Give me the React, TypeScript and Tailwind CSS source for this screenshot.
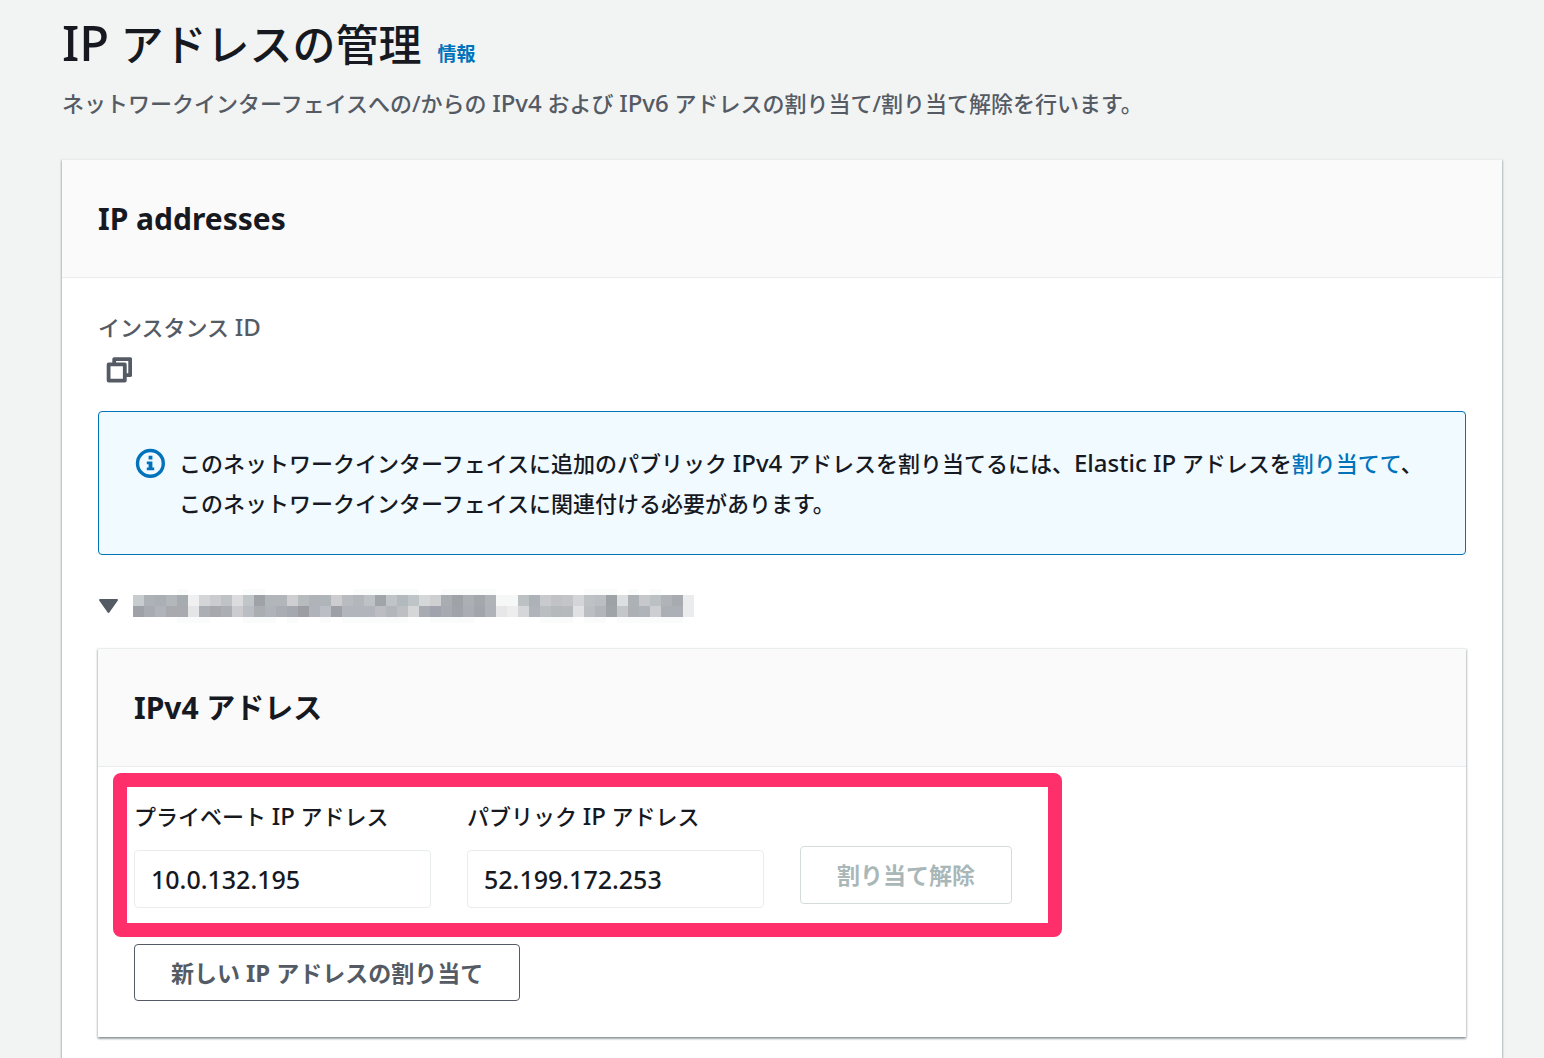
import { useState, type ReactNode } from 'react'

// Colores de la barra censurada, fila superior e inferior
const MASK_TOP =
  'c7cccf adb2b6 a9afb4 b2b7bb a6abaf f0f0f0 d3d5d7 cacccf bfc3c6 dcdcde c0c5c8 9fa3a8 b1b6bb b2b6bb cfcfd1 b6bbbe b0b4b9 b0b5ba cdcdcf b8bcc0 b2b7bb bcc2c5 a0a5aa bfc4c7 b3babd bfc4c6 d6d7d9 cdcfd1 a9adb2 9fa3a8 acb0b5 a4a8ad b0b4b8 f6f7f7 f6f7f7 bcc1c4 adb2b8 c8cacd c0c2c6 c3c5c8 d3d5d8 bfc2c5 babfc4 9da2a6 dddee0 acb1b5 c6c8cb bbc0c3 b0b4b8 a8acb1 ebecee'.split(' ')
const MASK_BOTTOM =
  '9ea1a7 a8abb1 b0b3b9 a8aab0 a8aab0 e4e5e7 abaeb4 a6a8ae abafb4 ccccd0 bbbdc5 aaadb2 b0b3ba a9acb2 a5a8ae 9b9da3 b0b3b9 bbbec5 9da0a6 b2b5bb b2b5bb b2b5bb bbbdc3 b3b7bb bebfc3 d5d6d8 a9abb3 a0a3ad a7aab0 a0a3aa aaadb3 a2a5ab b0b2b9 e7e7ea ededee d5d6d9 b0b3b9 bbbec1 b5b9bc b7babd e0e1e3 bbbfc3 b2b6bb 9fa4a8 c4c6ca adb0b5 b0b3ba cdced1 acafb6 acafb5 ebecee'.split(' ')
const FAINT_TOP = [4, 10, 11, 20, 21, 22, 23, 24, 25, 28, 29, 30, 31, 32, 41, 42, 43, 45, 47]
const FAINT_BOTTOM = [4, 5, 6, 10, 11, 12, 14, 17, 19, 20, 21, 22, 23, 24, 27, 28, 29, 30, 37, 38, 39, 41, 42, 44, 45, 46, 47, 48, 49]

function MaskedName() {
  return (
    <svg width="561" height="34" viewBox="0 0 561 34" shapeRendering="crispEdges" aria-hidden="true">
      {FAINT_TOP.map((c) => (
        <rect key={`ft${c}`} x={c * 11} y="0" width="11" height="6" fill="#fafbfb" />
      ))}
      {FAINT_BOTTOM.map((c) => (
        <rect key={`fb${c}`} x={c * 11} y="28" width="11" height="6" fill="#fafbfb" />
      ))}
      {MASK_TOP.map((color, i) => (
        <rect key={`t${i}`} x={i * 11} y="6" width="11" height="11" fill={`#${color}`} />
      ))}
      {MASK_BOTTOM.map((color, i) => (
        <rect key={`b${i}`} x={i * 11} y="17" width="11" height="11" fill={`#${color}`} />
      ))}
    </svg>
  )
}

function CopyIcon() {
  return (
    <svg width="26" height="26" viewBox="0 0 26 26" fill="none" stroke="currentColor" strokeWidth="3.8" strokeLinejoin="round" aria-hidden="true">
      <rect x="2.6" y="7.4" width="16.2" height="16.2" />
      <path d="M8.2 7V2.2h16v16H19" />
    </svg>
  )
}

function InfoIcon() {
  return (
    <svg className="shrink-0" width="30" height="30" viewBox="0 0 30 30" fill="#0073bb" aria-hidden="true">
      <circle cx="15.4" cy="15.4" r="12.9" fill="none" stroke="#0073bb" strokeWidth="3.4" />
      <path d="M13.6 7.8h3.8v3.6h-3.8zM11.8 13.4h5.6v6h1.8v2.8h-7.4v-2.8h1.8v-3.2h-1.8z" />
    </svg>
  )
}

// El texto latino va un poco mas grande que el japones
function Latin({ children }: { children: ReactNode }) {
  return <span className="text-[24px]">{children}</span>
}

function Panel({ title, className, children }: { title: ReactNode; className: string; children: ReactNode }) {
  return (
    <section
      className={`border-t border-[#eaeded] bg-white shadow-[0_2px_2px_0_rgba(0,28,36,0.3),1px_1px_2px_0_rgba(0,28,36,0.15),-1px_1px_2px_0_rgba(0,28,36,0.15)] ${className}`}
    >
      <header className="border-b border-[#eaeded] bg-[#fafafa] p-9">
        <h2 className="text-[29px] leading-[45px] font-bold">{title}</h2>
      </header>
      {children}
    </section>
  )
}

function Field({ id, label, initial }: { id: string; label: ReactNode; initial: string }) {
  const [value, setValue] = useState(initial)

  return (
    <div className="flex w-[297px] flex-col gap-4">
      <label htmlFor={id} className="leading-9">
        {label}
      </label>
      <input
        id={id}
        type="text"
        value={value}
        onChange={(e) => setValue(e.target.value)}
        className="h-[58px] w-full rounded-sm border border-[#eaeded] bg-white px-4 text-[25px]"
      />
    </div>
  )
}

export default function App() {
  const [open, setOpen] = useState(true)

  return (
    <main
      lang="ja"
      className="flex min-h-screen flex-col bg-[#f2f3f3] pr-[42px] pl-[62px] font-['Noto_Sans','Noto_Sans_CJK_JP',sans-serif] text-[22px] font-medium text-[#16191f]"
    >
      <div className="flex items-baseline gap-4 pt-3">
        <h1 className="text-[43px] leading-15">
          <span className="text-[49px]">IP</span> アドレスの管理
        </h1>
        <a href="#info" className="text-[19px] font-bold text-[#0073bb]">
          情報
        </a>
      </div>
      <p className="mt-2 leading-10 text-[#545b64]">
        ネットワークインターフェイスへの/からの <Latin>IPv4</Latin> および <Latin>IPv6</Latin> アドレスの割り当て/割り当て解除を行います。
      </p>

      <Panel title={<span className="text-[30px]">IP addresses</span>} className="mt-9 flex-1">
        <div className="px-9 pt-[31px] pb-4">
          <div className="leading-9 text-[#545b64]">
            インスタンス <Latin>ID</Latin>
          </div>
          <button type="button" aria-label="コピー" className="mt-3 ml-2 block text-[#545b64]">
            <CopyIcon />
          </button>

          <div className="mt-7 flex gap-[14px] rounded-sm border border-[#0073bb] bg-[#f1faff] px-9 py-[31px]">
            <div className="flex h-10 items-center">
              <InfoIcon />
            </div>
            <p className="leading-10">
              このネットワークインターフェイスに追加のパブリック <Latin>IPv4</Latin> アドレスを割り当てるには、<Latin>Elastic IP</Latin> アドレスを
              <a href="#allocate" className="text-[#0073bb]">
                割り当てて
              </a>
              、<br />
              このネットワークインターフェイスに関連付ける必要があります。
            </p>
          </div>

          <button
            type="button"
            aria-expanded={open}
            aria-label="インターフェイス"
            onClick={() => setOpen(!open)}
            className="mt-[34px] flex items-center gap-[15px]"
          >
            <svg width="20" height="16" viewBox="0 0 20 16" fill="#545b64" stroke="#545b64" strokeWidth="2" strokeLinejoin="round" aria-hidden="true">
              <path d="M2 2h17l-8.5 12z" />
            </svg>
            <MaskedName />
          </button>

          {open && (
            <Panel
              title={
                <>
                  <span className="text-[30px]">IPv4</span> アドレス
                </>
              }
              className="mt-[25px]"
            >
              <div className="px-9 pt-[31px] pb-9">
                <div className="relative flex w-fit items-end gap-9">
                  <Field
                    id="private-ip"
                    label={
                      <>
                        プライベート <Latin>IP</Latin> アドレス
                      </>
                    }
                    initial="10.0.132.195"
                  />
                  <Field
                    id="public-ip"
                    label={
                      <>
                        パブリック <Latin>IP</Latin> アドレス
                      </>
                    }
                    initial="52.199.172.253"
                  />
                  <button
                    type="button"
                    disabled
                    className="mb-1 h-[58px] rounded-sm border border-[#d5dbdb] px-9 text-[23px] font-bold text-[#aab7b8]"
                  >
                    割り当て解除
                  </button>
                  <div className="pointer-events-none absolute -top-[25px] -right-[50px] -bottom-[29px] -left-[21px] rounded-lg border-14 border-[#ff2f6c]" />
                </div>

                <button
                  type="button"
                  className="mt-9 h-[57px] rounded-sm border border-[#545b64] px-9 text-[23px] font-bold text-[#545b64]"
                >
                  新しい <Latin>IP</Latin> アドレスの割り当て
                </button>
              </div>
            </Panel>
          )}
        </div>
      </Panel>
    </main>
  )
}
